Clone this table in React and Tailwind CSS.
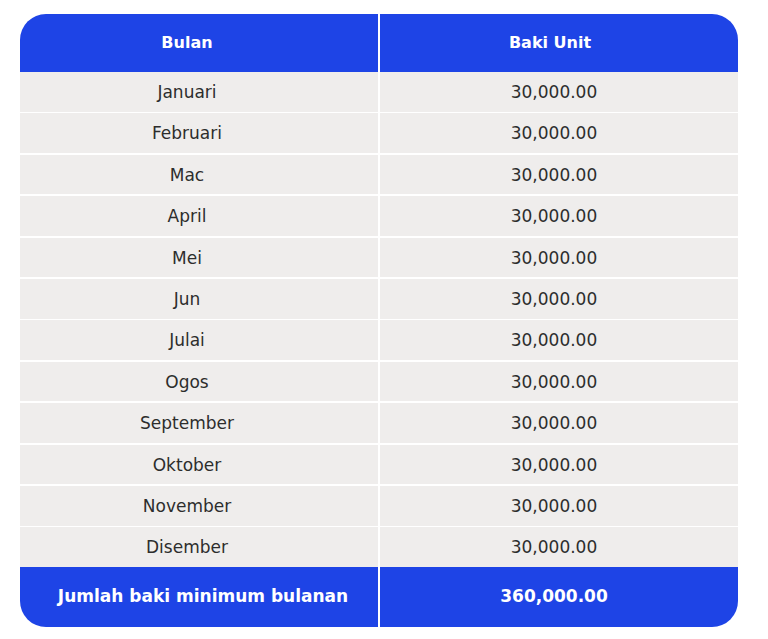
const months = [
  'Januari',
  'Februari',
  'Mac',
  'April',
  'Mei',
  'Jun',
  'Julai',
  'Ogos',
  'September',
  'Oktober',
  'November',
  'Disember',
];

export default function App() {
  return (
    <div className="min-h-screen bg-white pt-[14px] pl-[20px]" style={{ fontFamily: '"DejaVu Sans", sans-serif' }}>
      <div className="w-[718px] rounded-[26px] overflow-hidden bg-white">
        {/* Header */}
        <div className="grid grid-cols-[358px_358px] gap-x-[2px] h-[58px] text-white font-bold text-[16px]">
          <div className="bg-[#1e44e6] flex items-center justify-center pr-[24px]">Bulan</div>
          <div className="bg-[#1e44e6] flex items-center justify-center pr-[18px]">Baki Unit</div>
        </div>

        {/* Rows */}
        <div className="flex flex-col gap-[1.8px]">
          {months.map((m) => (
            <div key={m} className="grid grid-cols-[358px_358px] gap-x-[2px] h-[39.6px] text-[17px] text-[#2d2d2d]">
              <div className="bg-[#efedec] flex items-center justify-center pr-[24px] pt-[2px]">{m}</div>
              <div className="bg-[#efedec] flex items-center justify-center pr-[10px] pt-[2px]">30,000.00</div>
            </div>
          ))}
        </div>

        {/* Footer */}
        <div className="grid grid-cols-[358px_358px] gap-x-[2px] h-[60px] text-white font-bold text-[17px]">
          <div className="bg-[#1e44e6] flex items-center justify-center pl-[8px]">Jumlah baki minimum bulanan</div>
          <div className="bg-[#1e44e6] flex items-center justify-center pr-[10px]">360,000.00</div>
        </div>
      </div>
    </div>
  );
}
